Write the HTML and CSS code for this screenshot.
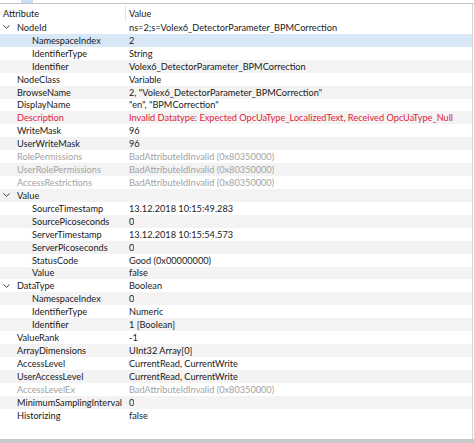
FILE: index.html
```html
<!DOCTYPE html>
<html lang="en">
<head>
    <meta charset="UTF-8">
    <title>Attributes</title>
    <link rel="stylesheet" href="styles.css">
</head>
<body>
    <div class="panel">
        <div class="tabstrip"><span class="tab"></span></div>
        <div class="grid">
            <div class="header">
                <div class="col-name">Attribute</div>
                <div class="col-value">Value</div>
            </div>
            <div class="row"><div class="col-name lvl1"><svg class="chev" viewBox="0 0 7 4"><path d="M0.5 0.5 L3.5 3.3 L6.5 0.5" /></svg>NodeId</div><div class="col-value">ns=2;s=Volex6_DetectorParameter_BPMCorrection</div></div>
            <div class="row selected"><div class="col-name lvl2">NamespaceIndex</div><div class="col-value">2</div></div>
            <div class="row"><div class="col-name lvl2">IdentifierType</div><div class="col-value">String</div></div>
            <div class="row"><div class="col-name lvl2">Identifier</div><div class="col-value">Volex6_DetectorParameter_BPMCorrection</div></div>
            <div class="row"><div class="col-name lvl1">NodeClass</div><div class="col-value">Variable</div></div>
            <div class="row"><div class="col-name lvl1">BrowseName</div><div class="col-value">2, "Volex6_DetectorParameter_BPMCorrection"</div></div>
            <div class="row"><div class="col-name lvl1">DisplayName</div><div class="col-value">"en", "BPMCorrection"</div></div>
            <div class="row error"><div class="col-name lvl1">Description</div><div class="col-value">Invalid Datatype: Expected OpcUaType_LocalizedText, Received OpcUaType_Null</div></div>
            <div class="row"><div class="col-name lvl1">WriteMask</div><div class="col-value">96</div></div>
            <div class="row"><div class="col-name lvl1">UserWriteMask</div><div class="col-value">96</div></div>
            <div class="row disabled"><div class="col-name lvl1">RolePermissions</div><div class="col-value">BadAttributeIdInvalid (0x80350000)</div></div>
            <div class="row disabled"><div class="col-name lvl1">UserRolePermissions</div><div class="col-value">BadAttributeIdInvalid (0x80350000)</div></div>
            <div class="row disabled"><div class="col-name lvl1">AccessRestrictions</div><div class="col-value">BadAttributeIdInvalid (0x80350000)</div></div>
            <div class="row"><div class="col-name lvl1"><svg class="chev" viewBox="0 0 7 4"><path d="M0.5 0.5 L3.5 3.3 L6.5 0.5" /></svg>Value</div><div class="col-value"></div></div>
            <div class="row"><div class="col-name lvl2">SourceTimestamp</div><div class="col-value">13.12.2018 10:15:49.283</div></div>
            <div class="row"><div class="col-name lvl2">SourcePicoseconds</div><div class="col-value">0</div></div>
            <div class="row"><div class="col-name lvl2">ServerTimestamp</div><div class="col-value">13.12.2018 10:15:54.573</div></div>
            <div class="row"><div class="col-name lvl2">ServerPicoseconds</div><div class="col-value">0</div></div>
            <div class="row"><div class="col-name lvl2">StatusCode</div><div class="col-value">Good (0x00000000)</div></div>
            <div class="row"><div class="col-name lvl2">Value</div><div class="col-value">false</div></div>
            <div class="row"><div class="col-name lvl1"><svg class="chev" viewBox="0 0 7 4"><path d="M0.5 0.5 L3.5 3.3 L6.5 0.5" /></svg>DataType</div><div class="col-value">Boolean</div></div>
            <div class="row"><div class="col-name lvl2">NamespaceIndex</div><div class="col-value">0</div></div>
            <div class="row"><div class="col-name lvl2">IdentifierType</div><div class="col-value">Numeric</div></div>
            <div class="row"><div class="col-name lvl2">Identifier</div><div class="col-value">1 [Boolean]</div></div>
            <div class="row"><div class="col-name lvl1">ValueRank</div><div class="col-value">-1</div></div>
            <div class="row"><div class="col-name lvl1">ArrayDimensions</div><div class="col-value">UInt32 Array[0]</div></div>
            <div class="row"><div class="col-name lvl1">AccessLevel</div><div class="col-value">CurrentRead, CurrentWrite</div></div>
            <div class="row"><div class="col-name lvl1">UserAccessLevel</div><div class="col-value">CurrentRead, CurrentWrite</div></div>
            <div class="row disabled"><div class="col-name lvl1">AccessLevelEx</div><div class="col-value">BadAttributeIdInvalid (0x80350000)</div></div>
            <div class="row"><div class="col-name lvl1">MinimumSamplingInterval</div><div class="col-value">0</div></div>
            <div class="row"><div class="col-name lvl1">Historizing</div><div class="col-value">false</div></div>
        </div>
        <div class="statusbar"></div>
    </div>
</body>
</html>
```

FILE: styles.css
```css
body {
    margin: 0;
    background: #ffffff;
    font-family: Lato, "Open Sans", sans-serif;
    font-size: 9.2px;
    color: #1a1a1a;
}
.panel {
    width: 474px;
    height: 443px;
    display: flex;
    flex-direction: column;
    overflow: hidden;
}
.tabstrip {
    height: 3px;
    border-bottom: 1px solid #c4c4c4;
    display: flex;
}
.tab {
    width: 12px;
    height: 3px;
    margin-left: 21px;
    background: #c9e0f5;
}
.grid {
    flex: 1;
    width: 472px;
    border-right: 1px solid #d4d4d4;
}
.header {
    display: flex;
    height: 17px;
    align-items: center;
    padding-top: 2px;
    box-sizing: border-box;
}
.header .col-name {
    border-right: 1px solid #e3e3e3;
    height: 15px;
    display: flex;
    align-items: center;
    padding-left: 3px;
}
.row {
    display: flex;
    height: 12.93px;
    align-items: center;
    white-space: nowrap;
}
.row:nth-child(odd) {
    background: #f3f3f3;
}
.row.selected {
    background: #d8e8f7;
}
.row.error {
    color: #e2213a;
}
.row.disabled {
    color: #a3a3a3;
}
.col-name {
    width: 126px;
    box-sizing: border-box;
    display: flex;
    align-items: center;
    overflow: hidden;
}
.col-value {
    padding-left: 3px;
    overflow: hidden;
}
.lvl1 {
    padding-left: 17px;
}
.lvl2 {
    padding-left: 32px;
}
.chev {
    width: 7px;
    height: 4px;
    margin-left: -14px;
    margin-right: 7px;
    fill: none;
    stroke: #404040;
    stroke-width: 1;
}
.statusbar {
    height: 4px;
    background: #c9c9c9;
}
```
